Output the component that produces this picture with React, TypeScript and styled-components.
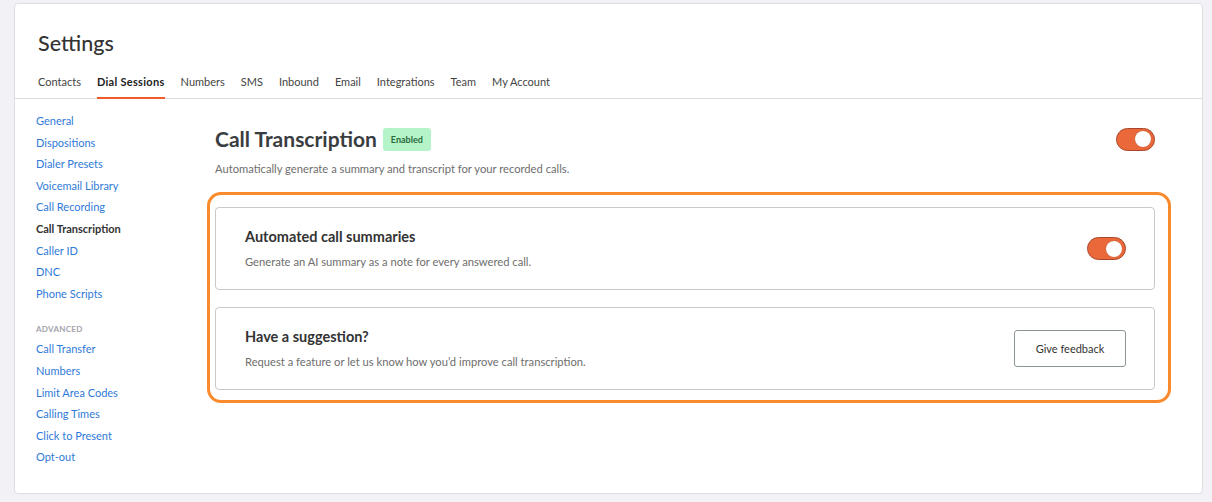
import React, { useState } from 'react';
import styled, { createGlobalStyle } from 'styled-components';

const GlobalStyle = createGlobalStyle`
  html, body {
    margin: 0;
    padding: 0;
    background: #f1f1f6;
    font-family: Lato, "Open Sans", sans-serif;
    color: #333;
  }
  * { box-sizing: border-box; }
`;

const Page = styled.div`
  padding: 3px 9px 8px 14px;
`;

const Card = styled.div`
  background: #fff;
  border: 1px solid #dedee3;
  border-radius: 4px;
  height: 491px;
  display: flex;
  flex-direction: column;
`;

const Header = styled.div`
  padding: 26px 24px 0 23px;
  border-bottom: 1px solid #dcdcdc;
`;

const Title = styled.h1`
  margin: 0;
  font-size: 21.5px;
  font-weight: 500;
  line-height: 26px;
  color: #333;
`;

const Tabs = styled.div`
  display: flex;
  gap: 16px;
  margin-top: 17px;
`;

const Tab = styled.div<{ $active?: boolean }>`
  font-size: 11px;
  line-height: 14px;
  padding: 2px 0 8px;
  color: ${p => (p.$active ? '#222' : '#444')};
  font-weight: ${p => (p.$active ? 700 : 400)};
  letter-spacing: ${p => (p.$active ? '0.3px' : '0')};
  border-bottom: 2px solid ${p => (p.$active ? '#f05a28' : 'transparent')};
  margin-bottom: -1px;
`;

const Body = styled.div`
  display: flex;
  flex: 1;
`;

const Sidebar = styled.nav`
  width: 200px;
  flex-shrink: 0;
  padding: 11px 0 0 21px;
  display: flex;
  flex-direction: column;
`;

const SideLink = styled.a<{ $active?: boolean }>`
  font-size: 11px;
  line-height: 21.6px;
  color: ${p => (p.$active ? '#333' : '#2f7ad8')};
  font-weight: ${p => (p.$active ? 700 : 400)};
  text-decoration: none;
`;

const SideHeading = styled.div`
  font-size: 8px;
  font-weight: 700;
  letter-spacing: 0.3px;
  color: #a3a3ab;
  margin-top: 17px;
  line-height: 17px;
`;

const Main = styled.main`
  flex: 1;
  padding: 26px 47px 0 0;
`;

const TitleRow = styled.div`
  display: flex;
  align-items: center;
`;

const PageTitle = styled.h2`
  margin: 0;
  font-size: 21px;
  font-weight: 700;
  line-height: 28px;
  color: #3a3d3f;
`;

const Badge = styled.span`
  margin-left: 6px;
  height: 23px;
  display: inline-flex;
  align-items: center;
  background: #b4f4c8;
  color: #2a6a3c;
  font-size: 9px;
  font-weight: 700;
  padding: 0 8px;
  border-radius: 3px;
`;

const Spacer = styled.div`
  flex: 1;
`;

const ToggleTrack = styled.button<{ $on: boolean }>`
  width: 39px;
  height: 23px;
  border-radius: 12px;
  border: 1px solid #a8482a;
  background: ${p => (p.$on ? '#ea683a' : '#ccc')};
  display: flex;
  align-items: center;
  justify-content: ${p => (p.$on ? 'flex-end' : 'flex-start')};
  padding: 0 3px;
  cursor: pointer;
`;

const ToggleKnob = styled.span`
  width: 16px;
  height: 16px;
  border-radius: 50%;
  background: #fff;
  box-shadow: 0 0 1px rgba(0, 0, 0, 0.3);
`;

const Lead = styled.p`
  margin: 9px 0 0;
  font-size: 11.2px;
  line-height: 14px;
  color: #6e6e6e;
`;

const Highlight = styled.div`
  margin: 16px -16px 0 -8px;
  border: 3px solid #fb8a2c;
  border-radius: 14px;
  padding: 12px 13px 10px 5px;
  display: flex;
  flex-direction: column;
  gap: 17px;
`;

const Section = styled.div`
  border: 1px solid #c9c9c9;
  border-radius: 4px;
  height: 83px;
  padding: 0 28px 0 29px;
  display: flex;
  align-items: center;
`;

const SectionText = styled.div`
  flex: 1;
`;

const SectionTitle = styled.div`
  font-size: 14.5px;
  font-weight: 700;
  line-height: 18px;
  color: #333;
`;

const SectionDesc = styled.div`
  margin-top: 9px;
  font-size: 11.2px;
  line-height: 14px;
  color: #6e6e6e;
`;

const OutlineButton = styled.button`
  width: 112px;
  height: 37px;
  border: 1px solid #8c9595;
  border-radius: 3px;
  background: #fff;
  font-family: inherit;
  font-size: 11px;
  color: #333;
  cursor: pointer;
`;

const Toggle: React.FC<{ initial?: boolean }> = ({ initial = true }) => {
  const [on, setOn] = useState(initial);
  return (
    <ToggleTrack $on={on} onClick={() => setOn(!on)}>
      <ToggleKnob />
    </ToggleTrack>
  );
};

const TABS = ['Contacts', 'Dial Sessions', 'Numbers', 'SMS', 'Inbound', 'Email', 'Integrations', 'Team', 'My Account'];
const MAIN_LINKS = ['General', 'Dispositions', 'Dialer Presets', 'Voicemail Library', 'Call Recording', 'Call Transcription', 'Caller ID', 'DNC', 'Phone Scripts'];
const ADVANCED_LINKS = ['Call Transfer', 'Numbers', 'Limit Area Codes', 'Calling Times', 'Click to Present', 'Opt-out'];

export default function App() {
  return (
    <Page>
      <GlobalStyle />
      <Card>
        <Header>
          <Title>Settings</Title>
          <Tabs>
            {TABS.map(t => (
              <Tab key={t} $active={t === 'Dial Sessions'}>{t}</Tab>
            ))}
          </Tabs>
        </Header>
        <Body>
          <Sidebar>
            {MAIN_LINKS.map(l => (
              <SideLink key={l} $active={l === 'Call Transcription'}>{l}</SideLink>
            ))}
            <SideHeading>ADVANCED</SideHeading>
            {ADVANCED_LINKS.map(l => (
              <SideLink key={l}>{l}</SideLink>
            ))}
          </Sidebar>
          <Main>
            <TitleRow>
              <PageTitle>Call Transcription</PageTitle>
              <Badge>Enabled</Badge>
              <Spacer />
              <Toggle />
            </TitleRow>
            <Lead>Automatically generate a summary and transcript for your recorded calls.</Lead>
            <Highlight>
              <Section>
                <SectionText>
                  <SectionTitle>Automated call summaries</SectionTitle>
                  <SectionDesc>Generate an AI summary as a note for every answered call.</SectionDesc>
                </SectionText>
                <Toggle />
              </Section>
              <Section>
                <SectionText>
                  <SectionTitle>Have a suggestion?</SectionTitle>
                  <SectionDesc>Request a feature or let us know how you’d improve call transcription.</SectionDesc>
                </SectionText>
                <OutlineButton>Give feedback</OutlineButton>
              </Section>
            </Highlight>
          </Main>
        </Body>
      </Card>
    </Page>
  );
}
